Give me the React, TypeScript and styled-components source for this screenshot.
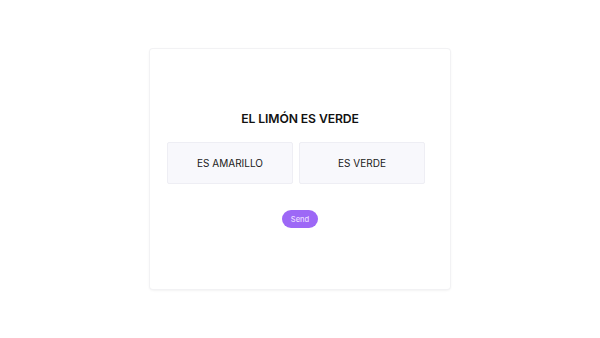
import React from "react";
import styled, { createGlobalStyle } from "styled-components";

const Global = createGlobalStyle`
  html, body { margin: 0; padding: 0; background: #ffffff; }
  body { font-family: Inter, "Liberation Sans", sans-serif; }
`;

const Page = styled.div`
  width: 600px;
  height: 338px;
  display: flex;
  justify-content: center;
  padding-top: 49px;
  box-sizing: border-box;
`;

const Card = styled.div`
  width: 300px;
  height: 240px;
  box-sizing: border-box;
  background: #fff;
  border-radius: 3px;
  box-shadow: 0 0 0 1px #f2f2f4, 0 1px 3px rgba(0, 0, 0, 0.1);
  display: flex;
  flex-direction: column;
  align-items: center;
  padding-top: 62px;
`;

const Title = styled.h2`
  margin: 0;
  font-size: 12.2px;
  font-weight: 600;
  color: #111;
  line-height: 16px;
  letter-spacing: -0.1px;
`;

const Options = styled.div`
  display: grid;
  grid-template-columns: 126px 126px;
  gap: 6px;
  margin-top: 15px;
  margin-right: 8px;
`;

const Option = styled.button`
  height: 42px;
  box-sizing: border-box;
  background: #f8f8fc;
  border: 1px solid #eeeef4;
  border-radius: 2px;
  font-family: inherit;
  font-size: 10px;
  color: #1a1a1a;
  padding: 0;
  display: flex;
  align-items: center;
  justify-content: center;
`;

const Send = styled.button`
  margin-top: 26px;
  width: 36px;
  height: 18px;
  border: none;
  border-radius: 9px;
  background: #9d68f6;
  color: #e9dcff;
  font-family: inherit;
  font-size: 7.5px;
  font-weight: 500;
  padding: 0;
`;

export default function App() {
  return (
    <>
      <Global />
      <Page>
        <Card>
          <Title>EL LIMÓN ES VERDE</Title>
          <Options>
            <Option>ES AMARILLO</Option>
            <Option>ES VERDE</Option>
          </Options>
          <Send>Send</Send>
        </Card>
      </Page>
    </>
  );
}
